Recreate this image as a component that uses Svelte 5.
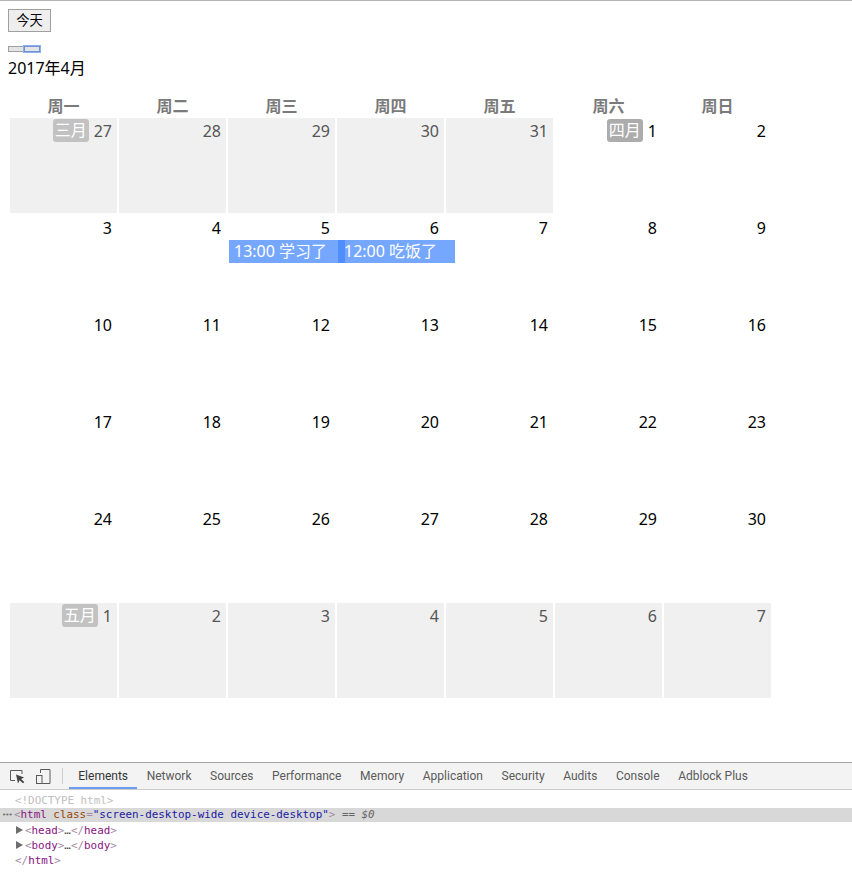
<script lang="ts">
    type Day = { n: number; other?: boolean; month?: string };

    const weekNames = ["周一", "周二", "周三", "周四", "周五", "周六", "周日"];

    const days: Day[] = [];
    [27, 28, 29, 30, 31].forEach((n) => days.push({ n, other: true }));
    days[0].month = "三月";
    for (let n = 1; n <= 30; n++) days.push({ n, month: n === 1 ? "四月" : undefined });
    for (let n = 1; n <= 7; n++) days.push({ n, other: true, month: n === 1 ? "五月" : undefined });

    const tabs = ["Elements", "Network", "Sources", "Performance", "Memory", "Application", "Security", "Audits", "Console", "Adblock Plus"];
</script>

<div class="page">
    <main>
        <button class="today">今天</button>
        <div class="switch">
            <button class="mini"></button><button class="mini focused"></button>
        </div>
        <div class="title">2017年4月</div>

        <div class="calendar">
            <div class="grid head">
                {#each weekNames as name}
                    <div class="week">{name}</div>
                {/each}
            </div>
            <div class="grid body">
                {#each days as day}
                    <div class="cell" class:other={day.other}>
                        {#if day.month}<span class="month">{day.month}</span>{/if}
                        <span class="num">{day.n}</span>
                    </div>
                {/each}
            </div>
            <div class="event first">13:00 学习了</div>
            <div class="event second">12:00 吃饭了</div>
        </div>
    </main>

    <section class="devtools">
        <div class="toolbar">
            <svg class="icon" width="16" height="16" viewBox="0 0 16 16" fill="none">
                <path d="M6 12.5H1.5V2.5H13V6" stroke="#5a5a5a" />
                <path d="M7 6.5l2 9 1.6-3.2 3.4 3 1.3-1.4-3.2-2.8 3-1.5z" fill="#444" />
            </svg>
            <svg class="icon" width="16" height="16" viewBox="0 0 16 16" fill="none">
                <path d="M5.5 5V1.5H15V15.5H7" stroke="#5a5a5a" />
                <rect x="1.5" y="7.5" width="5.5" height="8" stroke="#5a5a5a" />
            </svg>
            <span class="sep"></span>
            {#each tabs as tab, i}
                <span class="tab" class:active={i === 0}>{tab}</span>
            {/each}
        </div>
        <div class="code">
            <div class="line doctype">&lt;!DOCTYPE html&gt;</div>
            <div class="line selected"><span class="dots">•••</span><span class="punct">&lt;</span><span class="tag">html</span> <span class="attr">class</span><span class="punct">=</span><span class="val">"screen-desktop-wide device-desktop"</span><span class="punct">&gt;</span> <span class="eq">== <i>$0</i></span></div>
            <div class="line child"><span class="arrow"></span><span class="punct">&lt;</span><span class="tag">head</span><span class="punct">&gt;</span><span class="ell">…</span><span class="punct">&lt;/</span><span class="tag">head</span><span class="punct">&gt;</span></div>
            <div class="line child"><span class="arrow"></span><span class="punct">&lt;</span><span class="tag">body</span><span class="punct">&gt;</span><span class="ell">…</span><span class="punct">&lt;/</span><span class="tag">body</span><span class="punct">&gt;</span></div>
            <div class="line"><span class="punct">&lt;/</span><span class="tag">html</span><span class="punct">&gt;</span></div>
        </div>
    </section>
</div>

<style>
    :global(body) {
        margin: 0;
    }

    .page {
        height: 894px;
        display: flex;
        flex-direction: column;
        font-family: "Noto Sans", "Noto Sans CJK SC", sans-serif;
        overflow: hidden;
        background: #fff;
    }

    main {
        flex: 1;
        border-top: 1px solid #b4b4b4;
        padding: 8px 8px 0;
    }

    .today {
        display: block;
        width: 43px;
        height: 23px;
        padding: 0 0 2px;
        border: 1px solid #a0a0a0;
        background: #eeeeee;
        font: 13.33px "Noto Sans CJK SC", sans-serif;
        color: #000;
    }

    .switch {
        display: flex;
        margin-top: 14px;
        height: 7px;
    }

    .mini {
        width: 16px;
        height: 6px;
        padding: 0;
        border: 1px solid #a0a0a0;
        background: #e4e4e4;
    }

    .mini.focused {
        outline: 1px solid #8ab0ee;
        border-color: #6f93d6;
    }

    .title {
        font-size: 16px;
        line-height: 22px;
        margin-top: 4px;
        color: #000;
    }

    .calendar {
        position: relative;
        margin-top: 17px;
    }

    .grid {
        display: grid;
        grid-template-columns: repeat(7, 107px);
        column-gap: 2px;
        padding-left: 2px;
    }

    .week {
        text-align: center;
        font-size: 16px;
        font-weight: 700;
        color: #7a7a7a;
        line-height: 20px;
        height: 20px;
    }

    .body {
        row-gap: 2px;
        margin-top: 2px;
    }

    .cell {
        height: 95px;
        box-sizing: border-box;
        padding: 2px 5px 0 0;
        display: flex;
        justify-content: flex-end;
        align-items: flex-start;
        gap: 5px;
        font-size: 16px;
        line-height: 22px;
        color: #000;
    }

    .cell.other {
        background: #f0f0f0;
        color: #555;
    }

    .month {
        background: #acacac;
        color: #fff;
        border-radius: 3px;
        padding: 0 2px;
        height: 23px;
        line-height: 23px;
        margin-top: -1px;
    }

    .cell.other .month {
        background: #c2c2c2;
    }

    .event {
        position: absolute;
        top: 144px;
        height: 23px;
        line-height: 23px;
        padding-left: 5px;
        font-size: 16px;
        color: #fff;
        background: rgba(65, 133, 255, 0.72);
        box-sizing: border-box;
        white-space: nowrap;
    }

    .first {
        left: 221px;
        width: 116px;
    }

    .second {
        left: 330px;
        width: 117px;
        padding-left: 6px;
    }

    .devtools {
        height: 132px;
        box-sizing: border-box;
        border-top: 1px solid #a3a3a3;
    }

    .toolbar {
        height: 27px;
        box-sizing: border-box;
        background: #f3f3f3;
        border-bottom: 1px solid #ccc;
        display: flex;
        align-items: center;
        font: 12px Roboto, sans-serif;
        color: #5a5a5a;
        padding-left: 9px;
    }

    .icon {
        margin-right: 10px;
        flex: none;
    }

    .sep {
        width: 1px;
        height: 16px;
        background: #ccc;
        margin: 0 6px 0 1px;
    }

    .tab {
        height: 26px;
        line-height: 26px;
        padding: 0 9.3px;
        box-sizing: border-box;
        white-space: nowrap;
    }

    .tab.active {
        color: #333;
        box-shadow: inset 0 -2px 0 #6b9cf0;
    }

    .code {
        font: 10.9px/15px "DejaVu Sans Mono", monospace;
        padding-top: 3px;
        color: #888;
    }

    .line {
        height: 15px;
        padding-left: 15px;
        white-space: pre;
        position: relative;
    }

    .doctype {
        color: #c0c0c0;
        height: 15px;
    }

    .selected {
        background: #d8d8d8;
        height: 14px;
        line-height: 14px;
        margin-bottom: 1px;
        padding-left: 14px;
    }

    .dots {
        position: absolute;
        left: 2px;
        font-size: 7px;
        color: #666;
        letter-spacing: -1px;
    }

    .child {
        padding-left: 25px;
    }

    .arrow {
        position: absolute;
        left: 16px;
        top: 3px;
        border-left: 7px solid #6e6e6e;
        border-top: 4px solid transparent;
        border-bottom: 4px solid transparent;
    }

    .tag {
        color: #881280;
    }

    .punct {
        color: #a58aa3;
    }

    .attr {
        color: #994500;
    }

    .val {
        color: #1a1aa6;
    }

    .eq {
        color: #666;
    }

    .ell {
        color: #444;
    }
</style>
